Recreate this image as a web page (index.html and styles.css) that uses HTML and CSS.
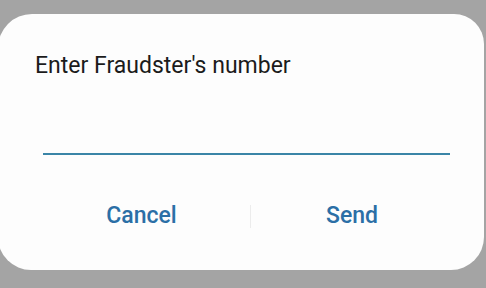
FILE: index.html
```html
<!DOCTYPE html>
<html lang="en">
<head>
    <meta charset="UTF-8">
    <meta name="viewport" content="width=device-width, initial-scale=1.0">
    <title>Report fraud</title>
    <link rel="stylesheet" href="styles.css">
</head>
<body>
    <div class="dialog">
        <h1 class="dialog-title">Enter Fraudster's number</h1>
        <div class="number-field"></div>
        <div class="dialog-actions">
            <button class="action-btn action-cancel">Cancel</button>
            <span class="action-divider"></span>
            <button class="action-btn action-send">Send</button>
        </div>
    </div>
</body>
</html>
```

FILE: styles.css
```css
body { margin: 0; padding: 0; background-color: #a4a4a4; font-family: Roboto, "Noto Sans", sans-serif; overflow: hidden; }
.dialog { width: 486px; height: 256px; box-sizing: border-box; margin: 14px 0 0 -2px; padding: 39px 0 0 0; background-color: #fdfdfd; border-radius: 34px 30px 33px 33px; display: flex; flex-direction: column; }
.dialog-title { margin: 0 0 0 37px; font-size: 23px; line-height: 26px; font-weight: 400; color: #1b1b1b; }
.number-field { height: 40px; box-sizing: border-box; margin: 36px 34px 0 45px; border-bottom: 2px solid #3a85a7; }
.dialog-actions { display: flex; align-items: center; margin-top: 47px; padding: 0 0 0 35px; height: 28px; }
.action-btn { background: none; border: none; padding: 0; font-family: inherit; font-size: 23px; line-height: 28px; font-weight: 500; color: #2b6fa6; cursor: pointer; }
.action-cancel { width: 217px; }
.action-send { width: 202px; }
.action-divider { width: 1px; height: 23px; background-color: #ececec; }
```
